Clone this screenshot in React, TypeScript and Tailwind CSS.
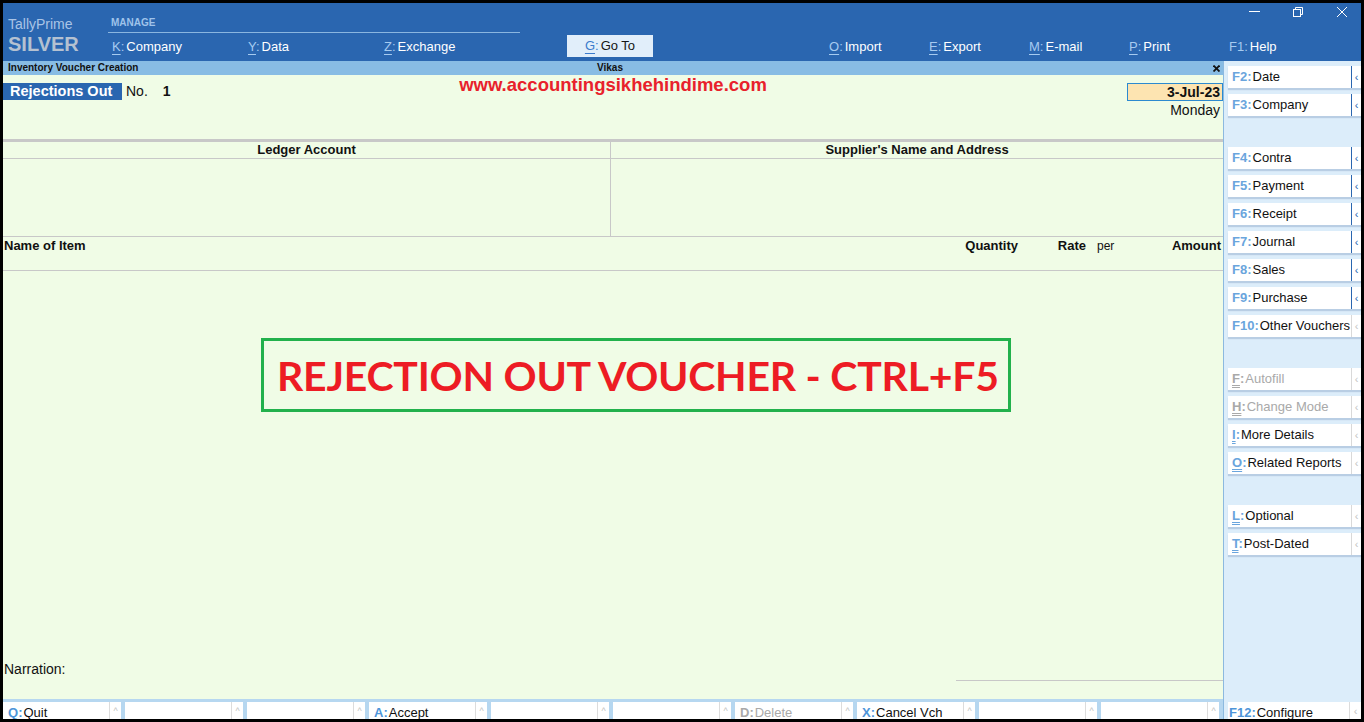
import type { ReactNode } from "react";

type SideItem = {
  k: string;
  label: string;
  state: "on" | "muted" | "off";
  letter?: boolean;
  gap?: boolean;
};

const sideItems: SideItem[] = [
  { k: "F2", label: "Date", state: "on" },
  { k: "F3", label: "Company", state: "on" },
  { k: "F4", label: "Contra", state: "on", gap: true },
  { k: "F5", label: "Payment", state: "on" },
  { k: "F6", label: "Receipt", state: "on" },
  { k: "F7", label: "Journal", state: "on" },
  { k: "F8", label: "Sales", state: "on" },
  { k: "F9", label: "Purchase", state: "on" },
  { k: "F10", label: "Other Vouchers", state: "muted" },
  { k: "F", label: "Autofill", state: "off", letter: true, gap: true },
  { k: "H", label: "Change Mode", state: "off", letter: true },
  { k: "I", label: "More Details", state: "muted", letter: true },
  { k: "O", label: "Related Reports", state: "muted", letter: true },
  { k: "L", label: "Optional", state: "muted", letter: true, gap: true },
  { k: "T", label: "Post-Dated", state: "muted", letter: true },
];

type FooterCell = { k?: string; label?: string; disabled?: boolean };

const footerCells: FooterCell[] = [
  { k: "Q", label: "Quit" },
  {},
  {},
  { k: "A", label: "Accept" },
  {},
  {},
  { k: "D", label: "Delete", disabled: true },
  { k: "X", label: "Cancel Vch" },
  {},
  {},
];

function NavKey({ k, label, underline = true }: { k: string; label: string; underline?: boolean }) {
  return (
    <span className="whitespace-nowrap">
      <span className="text-[#a6cbf0]">
        <span className={underline ? "underline decoration-1 underline-offset-[3px]" : ""}>{k}</span>:
      </span>
      <span className="ml-[2px] text-white">{label}</span>
    </span>
  );
}

function WindowControls() {
  return (
    <div className="absolute left-[1229px] top-0 flex h-[17px]">
      <div className="flex w-[44px] items-center justify-center">
        <svg width="11" height="1" viewBox="0 0 11 1">
          <line x1="0" y1="0.5" x2="11" y2="0.5" stroke="white" strokeWidth="1" />
        </svg>
      </div>
      <div className="flex w-[44px] items-center justify-center">
        <svg width="10" height="10" viewBox="0 0 10 10" fill="none" stroke="white" strokeWidth="1">
          <rect x="0.5" y="2.5" width="7" height="7" />
          <path d="M2.5 2.5V0.5H9.5V7.5H7.5" />
        </svg>
      </div>
      <div className="flex w-[44px] items-center justify-center">
        <svg width="10" height="10" viewBox="0 0 10 10" stroke="white" strokeWidth="1">
          <line x1="0" y1="0" x2="10" y2="10" />
          <line x1="10" y1="0" x2="0" y2="10" />
        </svg>
      </div>
    </div>
  );
}

function TopBar() {
  return (
    <header className="relative flex h-[58px] shrink-0 bg-[#2a66b0]">
      {/* product name */}
      <div className="w-[105px] pl-[5px] pt-[13px]">
        <div className="text-[14px] leading-[17px] text-[#a9c4e6]">TallyPrime</div>
        <div className="text-[20px] font-bold leading-[22px] text-[#b5c1d1]">SILVER</div>
      </div>

      {/* manage group */}
      <div className="w-[412px] pt-[14px]">
        <div className="pl-[3px] text-[10px] font-bold leading-[12px] text-[#9fc3ea]">MANAGE</div>
        <div className="mt-[3px] h-px bg-[#8ab6e0]" />
        <div className="mt-[6px] flex pl-[4px] text-[13px] leading-[16px]">
          <div className="w-[137px]">
            <NavKey k="K" label="Company" />
          </div>
          <div className="w-[137px]">
            <NavKey k="Y" label="Data" />
          </div>
          <div className="w-[137px]">
            <NavKey k="Z" label="Exchange" />
          </div>
        </div>
      </div>

      <div className="ml-[47px] mt-[32px] flex h-[22px] w-[86px] items-center justify-center bg-[#e1eefa] text-[13px] leading-[16px]">
        <span className="text-[#3b7bcc]">
          <span className="underline decoration-1 underline-offset-[3px]">G</span>:
        </span>
        <span className="ml-[2px] text-[#151515]">Go To</span>
      </div>

      <div className="ml-[176px] flex pt-[36px] text-[13px] leading-[16px]">
        <div className="w-[100px]">
          <NavKey k="O" label="Import" />
        </div>
        <div className="w-[100px]">
          <NavKey k="E" label="Export" />
        </div>
        <div className="w-[100px]">
          <NavKey k="M" label="E-mail" />
        </div>
        <div className="w-[100px]">
          <NavKey k="P" label="Print" />
        </div>
        <div className="w-[100px]">
          <NavKey k="F1" label="Help" underline={false} />
        </div>
      </div>

      <WindowControls />
    </header>
  );
}

function SideButton({ item }: { item: SideItem }) {
  const keyColor = item.state === "off" ? "text-[#a9a9a9]" : "text-[#6aa5dd]";
  const labelColor = item.state === "off" ? "text-[#a9a9a9]" : "text-[#111111]";
  const edge = item.state === "on" ? "border-[#2a66b0] text-[#2a66b0]" : "border-[#d9d9d9] text-[#c4c4c4]";
  return (
    <div
      className={`flex h-[22px] shrink-0 bg-white shadow-[0_2px_1px_rgba(120,150,185,0.35)] ${
        item.gap ? "mt-[31px]" : "mt-[6px]"
      } first:mt-0`}
    >
      <div className="w-[123px] pl-[4px] text-[13px] leading-[22px] whitespace-nowrap">
        <span className={`font-bold ${keyColor}`}>
          {item.letter ? (
            <span className="underline decoration-double decoration-1 underline-offset-[2px]">{item.k}</span>
          ) : (
            item.k
          )}
          :
        </span>
        <span className={`ml-[1px] ${labelColor}`}>{item.label}</span>
      </div>
      <div className={`flex flex-1 items-center justify-center border-l text-[11px] leading-[22px] ${edge}`}>‹</div>
    </div>
  );
}

function FooterKey({ cell }: { cell: FooterCell }) {
  return (
    <div className="flex h-[22px] w-[118px] shrink-0 bg-white">
      <div className="w-[107px] border-r border-[#dcdcdc] pl-[5px] pt-[2px] text-[13px] leading-[17px] whitespace-nowrap">
        {cell.k && (
          <>
            <span className={`font-bold ${cell.disabled ? "text-[#a9a9a9]" : "text-[#4e95d9]"}`}>
              <span className="underline decoration-1 underline-offset-[2px]">{cell.k}</span>:
            </span>
            <span className={`ml-[1px] ${cell.disabled ? "text-[#a9a9a9]" : "text-[#111111]"}`}>{cell.label}</span>
          </>
        )}
      </div>
      <div className="flex-1 pt-[1px] text-center text-[9px] leading-[17px] text-[#c0c0c0]">^</div>
    </div>
  );
}

function VoucherBody({ children }: { children?: ReactNode }) {
  return (
    <div className="flex flex-1 flex-col bg-[#f0fce6] text-[#111111]">
      {/* voucher type, number and date */}
      <div className="grid h-[64px] shrink-0 grid-cols-[1fr_auto_1fr]">
        <div className="flex items-start pt-[8px]">
          <span className="h-[17px] w-[119px] bg-[#2a66b0] pl-[7px] text-[14.5px] font-bold leading-[17px] text-white">
            Rejections Out
          </span>
          <span className="ml-[4px] text-[14px] leading-[17px]">No.</span>
          <span className="ml-[15px] text-[14px] font-bold leading-[17px]">1</span>
        </div>
        <div className="text-center text-[18.5px] font-bold leading-[20px] text-[#e8212b]">
          www.accountingsikhehindime.com
        </div>
        <div className="flex flex-col items-end pt-[8px]">
          <div className="h-[18px] w-[96px] border border-[#2c8ad0] bg-[#fde4b1] pr-[2px] text-right text-[14px] font-bold leading-[16px]">
            3-Jul-23
          </div>
          <div className="mt-[1px] pr-[3px] text-[14px] leading-[16px]">Monday</div>
        </div>
      </div>

      <div className="h-[3px] shrink-0 bg-[#c8c8c8]" />

      {/* party section */}
      <div className="flex h-[95px] shrink-0 border-b border-[#c8c8c8]">
        <div className="w-[608px] border-r border-[#c8c8c8]">
          <div className="h-[17px] border-b border-[#c8c8c8] text-center text-[13px] font-bold leading-[16px]">
            Ledger Account
          </div>
        </div>
        <div className="flex-1">
          <div className="h-[17px] border-b border-[#c8c8c8] text-center text-[13px] font-bold leading-[16px]">
            Supplier&apos;s Name and Address
          </div>
        </div>
      </div>

      {/* item columns */}
      <div className="flex h-[34px] shrink-0 border-b border-[#c8c8c8] pl-[1px] pr-[2px] pt-[1px] text-[13px] leading-[16px]">
        <div className="flex-1 font-bold">Name of Item</div>
        <div className="w-[90px] text-right font-bold">Quantity</div>
        <div className="w-[68px] text-right font-bold">Rate</div>
        <div className="w-[56px] pl-[11px] text-[12px]">per</div>
        <div className="w-[79px] text-right font-bold">Amount</div>
      </div>

      <div className="flex flex-1 flex-col">
        {children}
        <div className="mt-auto flex h-[38px] justify-between">
          <div className="pl-[1px] text-[14px] leading-[16px]">Narration:</div>
          <div className="mt-[19px] w-[267px] border-t border-[#c8c8c8]" />
        </div>
      </div>
    </div>
  );
}

export default function App() {
  return (
    <div className="flex h-[722px] w-[1364px] flex-col overflow-hidden border-[3px] border-black bg-black font-['Liberation_Sans',Arial,sans-serif]">
      <TopBar />
      <div className="flex h-[658px] overflow-hidden">
        <main className="flex w-[1220px] shrink-0 flex-col">
          <div className="relative flex h-[14px] shrink-0 items-center bg-[#88bce4] pl-[5px] pr-[3px] text-[10px] font-bold leading-[14px] text-[#111111]">
            <span>Inventory Voucher Creation</span>
            <span className="absolute left-0 right-[6px] text-center">Vikas</span>
            <svg className="ml-auto" width="7" height="7" viewBox="0 0 7 7" stroke="#111111" strokeWidth="1.8">
              <line x1="0.5" y1="0.5" x2="6.5" y2="6.5" />
              <line x1="6.5" y1="0.5" x2="0.5" y2="6.5" />
            </svg>
          </div>

          <VoucherBody>
            <div className="ml-[258px] mt-[67px] w-[750px] border-[3px] border-[#22b14c] pb-[12px] pl-[13px] pt-[14px] font-['Lato',sans-serif] text-[41px] font-bold leading-[42px] tracking-[-0.25px] text-[#ed1c24] whitespace-nowrap">
              REJECTION OUT VOUCHER - CTRL+F5
            </div>
          </VoucherBody>

          <div className="flex h-[20px] shrink-0 gap-[4px] overflow-hidden bg-[#b6d7f0] pt-[3px]">
            {footerCells.map((cell, i) => (
              <FooterKey key={i} cell={cell} />
            ))}
          </div>
        </main>

        <aside className="flex w-[138px] shrink-0 flex-col overflow-hidden border-l border-[#8cb9df] bg-[#dcedfa] pl-[4px] pt-[5px]">
          {sideItems.map((item) => (
            <SideButton key={item.k} item={item} />
          ))}
          <div className="mt-auto flex h-[22px] shrink-0 translate-y-[5px] bg-white">
            <div className="w-[122px] border-r border-[#dcdcdc] pl-[1px] pt-[2px] text-[13px] leading-[17px] whitespace-nowrap">
              <span className="font-bold text-[#4e95d9]">F12:</span>
              <span className="ml-[1px] text-[#111111]">Configure</span>
            </div>
            <div className="flex-1 pt-[1px] text-center text-[11px] leading-[17px] text-[#c4c4c4]">‹</div>
          </div>
        </aside>
      </div>
    </div>
  );
}
